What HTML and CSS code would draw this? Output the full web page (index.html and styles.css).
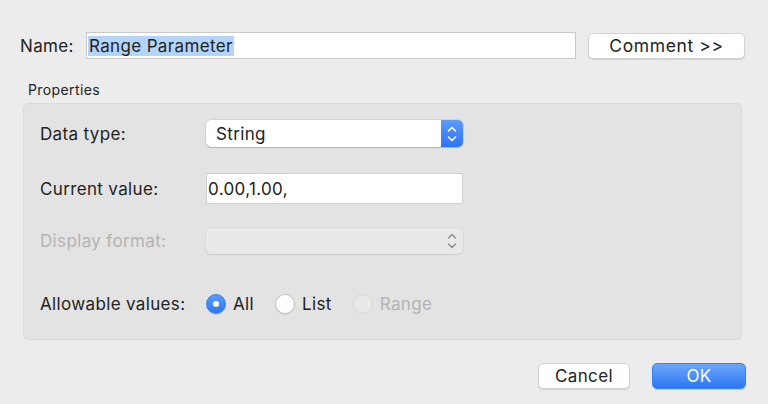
FILE: index.html
```html
<!DOCTYPE html>
<html>
<head>
<meta charset="utf-8">
<link rel="stylesheet" href="styles.css">
</head>
<body>
<div class="dialog">
  <div class="name-row">
    <span class="name-label">Name:</span>
    <div class="text-field name-field"><span class="sel">Range Parameter</span></div>
    <div class="btn comment-btn">Comment &gt;&gt;</div>
  </div>
  <div class="group-title">Properties</div>
  <div class="panel">
    <div class="row row-type">
      <span class="label">Data type:</span>
      <div class="popup">
        <span class="popup-text">String</span>
        <span class="stepper">
          <svg width="10" height="18" viewBox="0 0 10 18"><path d="M1.5 6 L5 2.5 L8.5 6 M1.5 12 L5 15.5 L8.5 12" fill="none" stroke="#fff" stroke-width="1.6" stroke-linecap="round" stroke-linejoin="round"/></svg>
        </span>
      </div>
    </div>
    <div class="row row-value">
      <span class="label">Current value:</span>
      <div class="text-field value-field">0.00,1.00,</div>
    </div>
    <div class="row row-format">
      <span class="label disabled">Display format:</span>
      <div class="popup popup-disabled">
        <span class="popup-text"></span>
        <span class="stepper-plain">
          <svg width="10" height="18" viewBox="0 0 10 18"><path d="M1.5 6 L5 2.5 L8.5 6 M1.5 12 L5 15.5 L8.5 12" fill="none" stroke="#8a8a8a" stroke-width="1.4" stroke-linecap="round" stroke-linejoin="round"/></svg>
        </span>
      </div>
    </div>
    <div class="row row-radios">
      <span class="label">Allowable values:</span>
      <div class="radios">
        <span class="radio-item"><span class="radio on"></span><span class="radio-text">All</span></span>
        <span class="radio-item"><span class="radio"></span><span class="radio-text">List</span></span>
        <span class="radio-item"><span class="radio off"></span><span class="radio-text disabled">Range</span></span>
      </div>
    </div>
  </div>
  <div class="footer">
    <div class="btn cancel-btn">Cancel</div>
    <div class="btn ok-btn">OK</div>
  </div>
</div>
</body>
</html>
```

FILE: styles.css
```css
html, body {
  margin: 0;
  padding: 0;
  background: #ececec;
}
body {
  font-family: "Inter", "Roboto", "Liberation Sans", sans-serif;
  font-size: 17px;
  letter-spacing: 0.35px;
  color: #222;
  width: 768px;
  height: 404px;
  overflow: hidden;
}
.dialog {
  padding-top: 32px;
}
.name-row {
  display: flex;
  align-items: center;
  padding-left: 20px;
  height: 27px;
}
.name-label {
  width: 66px;
}
.text-field {
  background: #fff;
  border: 1px solid #c9c9c9;
  box-sizing: border-box;
  display: flex;
  align-items: center;
}
.name-field {
  width: 490px;
  height: 27px;
  padding-left: 1px;
}
.sel {
  background: #b4d5fb;
  line-height: 20px;
  padding: 0 1px;
}
.btn {
  box-sizing: border-box;
  height: 26px;
  border-radius: 5px;
  background: #fff;
  border: 1px solid #d3d3d3;
  box-shadow: 0 1px 1px rgba(0,0,0,0.12);
  display: flex;
  align-items: center;
  justify-content: center;
}
.comment-btn {
  margin-left: 12px;
  width: 157px;
  font-size: 17.5px;
  letter-spacing: 0.6px;
}
.group-title {
  font-size: 14px;
  letter-spacing: 0.4px;
  padding-left: 28px;
  margin-top: 21px;
  line-height: 20px;
}
.panel {
  margin: 3px 26px 0 23px;
  height: 237px;
  box-sizing: border-box;
  background: #e3e3e3;
  border: 1px solid #dadada;
  border-radius: 5px;
  padding: 16px 0 0 16px;
}
.row {
  display: flex;
  align-items: center;
}
.label {
  width: 166px;
}
.disabled {
  color: #b3b3b3;
}
.row-type { height: 27px; }
.row-value { height: 31px; margin-top: 26px; }
.row-format { height: 26px; margin-top: 24px; }
.row-radios { height: 20px; margin-top: 40px; }

.popup {
  width: 257px;
  height: 27px;
  box-sizing: border-box;
  background: #fff;
  border-radius: 5px;
  box-shadow: 0 0 0 0.5px rgba(0,0,0,0.15), 0 1px 1px rgba(0,0,0,0.15);
  display: flex;
  align-items: center;
  overflow: hidden;
}
.popup-text {
  flex: 1;
  padding-left: 10px;
}
.stepper {
  width: 22px;
  height: 100%;
  background: linear-gradient(#5a9bf8, #2e74f2);
  display: flex;
  align-items: center;
  justify-content: center;
}
.popup-disabled {
  height: 26px;
  background: #e9e9e9;
  box-shadow: 0 0 0 0.5px rgba(0,0,0,0.08), 0 1px 1px rgba(0,0,0,0.06);
}
.stepper-plain {
  width: 22px;
  height: 100%;
  display: flex;
  align-items: center;
  justify-content: center;
}
.value-field {
  width: 257px;
  height: 31px;
  padding-left: 1px;
  border-color: #cfcfcf;
}
.radios {
  display: flex;
  align-items: center;
}
.radio-item {
  display: flex;
  align-items: center;
  margin-right: 21px;
}
.radio {
  width: 20px;
  height: 20px;
  box-sizing: border-box;
  border-radius: 50%;
  background: #fff;
  border: 1px solid #c3c3c3;
  box-shadow: 0 1px 1px rgba(0,0,0,0.08);
  margin-right: 7px;
  position: relative;
}
.radio.on {
  background: linear-gradient(#5a9bf8, #2f77f3);
  border-color: #3a7fef;
}
.radio.on::after {
  content: "";
  position: absolute;
  left: 6px;
  top: 6px;
  width: 6px;
  height: 6px;
  border-radius: 50%;
  background: #fff;
}
.radio.off {
  background: #e8e8e8;
  border-color: #d5d5d5;
  box-shadow: none;
}
.footer {
  display: flex;
  justify-content: flex-end;
  padding-right: 22px;
  margin-top: 23px;
}
.cancel-btn {
  width: 92px;
  margin-right: 22px;
}
.ok-btn {
  width: 94px;
  color: #fff;
  background: linear-gradient(#6aa7f9, #2f76f2);
  border-color: #3a7fef;
}
```
